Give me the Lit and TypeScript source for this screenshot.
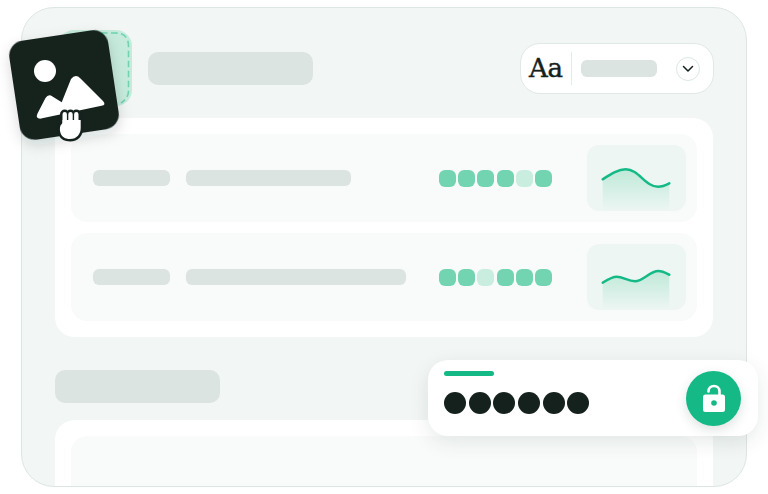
import { LitElement, html, css, svg } from "lit";
import { customElement } from "lit/decorators.js";

const rows = [
  {
    w: 165,
    dots: [1, 1, 1, 1, 0, 1],
    line: "M15.7 34.3C24 29 31 24.3 38.7 24.3C52 24.3 58 41.7 71 41.7C75 41.7 79 40 82.3 38.3",
  },
  {
    w: 220,
    dots: [1, 1, 0, 1, 1, 1],
    line: "M15.7 38.7C20 36 25 32.7 29.7 32.7C36 32.7 41 37.3 48 37.3C56 37.3 63 27 71.3 27C75.5 27 79 29 82.3 30.7",
  },
];

@customElement("app-root")
export class AppRoot extends LitElement {
  static styles = css`
    :host {
      display: block;
      position: relative;
      width: 768px;
      height: 494px;
      overflow: hidden;
      background: #fff;
      font-family: "Liberation Sans", sans-serif;
    }
    .window {
      box-sizing: border-box;
      margin: 7px 0 0 21px;
      width: 726px;
      height: 480px;
      padding: 35px 33px 0;
      background: #f2f6f5;
      border: 1px solid #dce7e3;
      border-radius: 33px;
      overflow: hidden;
    }
    .header {
      display: flex;
      justify-content: space-between;
      align-items: center;
      height: 51px;
      margin-bottom: 24px;
    }
    .sk {
      background: #dbe4e1;
      border-radius: 8px;
    }
    .title {
      width: 165px;
      height: 33px;
      border-radius: 10px;
    }
    .header .title {
      margin-left: 93px;
    }
    .select {
      box-sizing: border-box;
      width: 194px;
      height: 51px;
      margin-right: -1px;
      display: flex;
      align-items: center;
      padding: 0 13px 0 8px;
      background: #fff;
      border: 1.5px solid #e0e9e6;
      border-radius: 20px;
    }
    .aa {
      width: 41.5px;
      font-family: "DejaVu Serif", serif;
      font-size: 26px;
      line-height: 33px;
      letter-spacing: -0.3px;
      color: #14211c;
      -webkit-text-stroke: 0.45px #14211c;
    }
    .divider {
      width: 1px;
      height: 33px;
      background: #e4ebe8;
      margin-right: 9.5px;
    }
    .select .sk {
      width: 76px;
      height: 17px;
      border-radius: 6px;
    }
    .chev {
      box-sizing: border-box;
      width: 24px;
      height: 24px;
      margin-left: auto;
      border: 1px solid #dce7e3;
      border-radius: 50%;
      display: flex;
      align-items: center;
      justify-content: center;
    }
    .card {
      box-sizing: border-box;
      width: 658px;
      background: #fff;
      border-radius: 20px;
      padding: 16px;
      display: flex;
      flex-direction: column;
      gap: 11px;
    }
    .row {
      box-sizing: border-box;
      height: 88px;
      display: flex;
      align-items: center;
      padding: 0 11px 0 22px;
      background: #f9fbfa;
      border-radius: 16px;
    }
    .bar {
      height: 16px;
      border-radius: 6px;
    }
    .b1 {
      width: 77px;
      margin-right: 16px;
    }
    .dots {
      display: flex;
      gap: 2.2px;
      margin-left: auto;
      margin-right: 35px;
    }
    .dot {
      width: 17px;
      height: 17px;
      border-radius: 6px;
      background: #72d4b1;
    }
    .dot.off {
      background: #c9eee0;
    }
    .chart {
      width: 99px;
      height: 66px;
      border-radius: 12px;
      background: #edf6f3;
      display: block;
    }
    .section {
      margin: 33px 0 17px;
    }
    .lower {
      height: 120px;
      display: block;
    }
    .inner {
      height: 100px;
      background: #f9fbfa;
      border-radius: 16px;
    }
    .float {
      position: absolute;
      left: 428px;
      top: 360px;
      box-sizing: border-box;
      width: 329.5px;
      height: 76px;
      padding: 11px 16.5px 11px 16px;
      background: #fff;
      border-radius: 20px;
      box-shadow: 0 6px 20px rgba(20, 50, 40, 0.1);
      display: flex;
      justify-content: space-between;
    }
    .pw-line {
      width: 50px;
      height: 5px;
      border-radius: 3px;
      background: #14b985;
      margin-bottom: 16px;
    }
    .pw-dots {
      display: flex;
      gap: 2.7px;
    }
    .pw-dot {
      width: 22px;
      height: 22px;
      border-radius: 50%;
      background: #14211c;
    }
    .lock {
      width: 55px;
      height: 55px;
      border-radius: 50%;
      background: #14b985;
      box-shadow: 0 4px 12px rgba(20, 50, 40, 0.14);
      display: flex;
      align-items: center;
      justify-content: center;
    }
    .media {
      position: absolute;
      left: 0;
      top: 20px;
      width: 145px;
      height: 130px;
      overflow: visible;
      display: block;
    }
  `;

  private chart(line: string, id: string) {
    return html`<svg class="chart" width="99" height="66" viewBox="0 0 99 66" fill="none">
      <defs>
        <linearGradient id=${id} x1="0" y1="0" x2="0" y2="1">
          <stop offset="0" stop-color="#bfe9d9" />
          <stop offset="1" stop-color="#edf6f3" />
        </linearGradient>
      </defs>
      <path d="${line}V66H15.7Z" fill="url(#${id})" />
      <path d=${line} stroke="#14b985" stroke-width="2.5" stroke-linecap="round" />
    </svg>`;
  }

  private media() {
    return svg`<svg class="media" viewBox="0 20 145 130" width="145" height="130" fill="none">
      <defs>
        <filter id="sh" x="-30%" y="-30%" width="160%" height="160%">
          <feDropShadow dx="0" dy="5" stdDeviation="7" flood-color="#14322a" flood-opacity="0.16" />
        </filter>
      </defs>
      <rect x="58" y="30" width="74" height="76" rx="16" fill="#c6ebdd" />
      <path d="M101 33H115Q128.5 33 128.5 46V91Q128.5 98 121 103" stroke="#6fd3b0" stroke-width="1.6" stroke-dasharray="6.5 3.5" />
      <rect x="14" y="35" width="100" height="100" rx="15" fill="#14211c" transform="rotate(-8.5 64 85)" filter="url(#sh)" />
      <circle cx="45" cy="71" r="11" fill="#fff" />
      <path d="M41 118.6Q35 119 37.5 113.5L45.5 98Q48.5 93.5 52.5 96.5L61.7 102.3L71 79Q75.5 73.5 80.5 78.5L103 101Q106.5 105 101.5 105.7Z" fill="#fff" />
      <g stroke="#14211c" stroke-width="9.4" stroke-linecap="round">
        <path d="M64.7 114.3V128M70.5 114.3V128M76.3 114.3V128" />
      </g>
      <path d="M62.5 123L60.5 125.5C59 130 60 139 70 139C77 139 80.7 134 80.7 128V120H62.5Z" fill="#14211c" stroke="#14211c" stroke-width="5" stroke-linejoin="round" />
      <path d="M62.5 123L60.5 125.5C59 130 60 139 70 139C77 139 80.7 134 80.7 128V120H62.5Z" fill="#fff" />
      <g stroke="#fff" stroke-width="4.4" stroke-linecap="round">
        <path d="M64.7 114.3V124M70.5 114.3V124M76.3 114.3V124" />
      </g>
    </svg>`;
  }

  render() {
    return html`
      <div class="window">
        <div class="header">
          <div class="sk title"></div>
          <div class="select">
            <span class="aa">Aa</span>
            <span class="divider"></span>
            <div class="sk"></div>
            <span class="chev">
              <svg width="12" height="8" viewBox="0 0 12 8" fill="none">
                <path d="M1.5 1.5L6 6L10.5 1.5" stroke="#14211c" stroke-width="1.5" stroke-linecap="round" stroke-linejoin="round" />
              </svg>
            </span>
          </div>
        </div>
        <div class="card">
          ${rows.map(
            (r, i) => html`<div class="row">
              <div class="sk bar b1"></div>
              <div class="sk bar" style="width:${r.w}px"></div>
              <div class="dots">
                ${r.dots.map((d) => html`<span class="dot ${d ? "" : "off"}"></span>`)}
              </div>
              ${this.chart(r.line, `g${i}`)}
            </div>`
          )}
        </div>
        <div class="sk title section"></div>
        <div class="card lower"><div class="inner"></div></div>
      </div>
      ${this.media()}
      <div class="float">
        <div>
          <div class="pw-line"></div>
          <div class="pw-dots">
            ${[0, 1, 2, 3, 4, 5].map(() => html`<span class="pw-dot"></span>`)}
          </div>
        </div>
        <div class="lock">
          <svg width="24" height="30" viewBox="0 0 24 30" fill="none">
            <path d="M6.5 7.5C6.5 4 8.8 2 12 2C15.2 2 17.5 4 17.5 7.5V11" stroke="#fff" stroke-width="2.6" stroke-linecap="round" />
            <path fill-rule="evenodd" clip-rule="evenodd" d="M3.5 10.5H20.5Q23 10.5 23 13V25.5Q23 28 20.5 28H3.5Q1 28 1 25.5V13Q1 10.5 3.5 10.5ZM12 16.2A2.8 2.8 0 1 0 12 21.8A2.8 2.8 0 1 0 12 16.2Z" fill="#fff" />
          </svg>
        </div>
      </div>
    `;
  }
}
